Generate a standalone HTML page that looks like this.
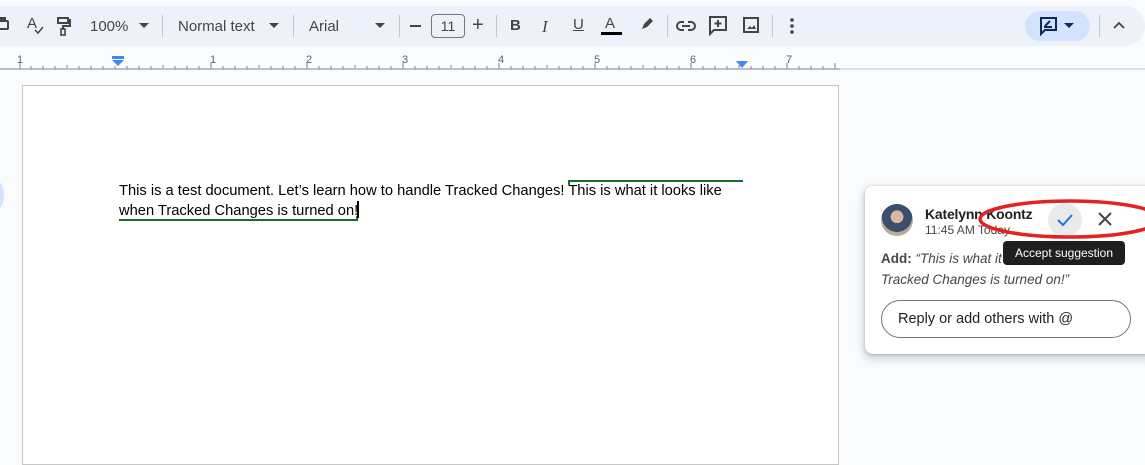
<!DOCTYPE html>
<html><head><style>
body{margin:0;width:1145px;height:456px;overflow:hidden;background:#f9fbfd;font-family:"Liberation Sans",Arial,sans-serif;position:relative}
.a{position:absolute}
.tb{left:-20px;top:6px;width:1165px;height:40px;background:#edf2fa;border-radius:20px}
.t{color:#444746;font-size:15px}
.sep{width:1px;height:22px;background:#c7c7c7;top:15px}
.car{position:absolute;top:23px;width:0;height:0;border-left:5px solid transparent;border-right:5px solid transparent;border-top:5px solid #444746}
</style></head><body>
<div class="a tb"></div>
<svg class="a" style="left:0;top:16px" width="12" height="20"><rect x="-6" y="5" width="14" height="8" rx="1" fill="none" stroke="#444" stroke-width="2"/><rect x="-2" y="1" width="8" height="4" fill="#444"/></svg>
<div class="a t" style="left:27px;top:15px;font-size:15px">A</div>
<svg class="a" style="left:34px;top:26px" width="10" height="9"><path d="M1 4l3 3 5-6" fill="none" stroke="#444" stroke-width="1.5"/></svg>
<svg class="a" style="left:56px;top:16px" width="16" height="20"><rect x="2" y="2" width="10" height="5" fill="none" stroke="#444" stroke-width="2"/><path d="M12 4h2v6H7v3" fill="none" stroke="#444" stroke-width="2"/><rect x="5" y="13" width="4" height="6" fill="none" stroke="#444" stroke-width="1.6"/></svg>
<div class="a t" style="left:90px;top:18px">100%</div>
<div class="car" style="left:139px"></div>
<div class="a sep" style="left:162px"></div>
<div class="a t" style="left:178px;top:18px">Normal text</div>
<div class="car" style="left:269px"></div>
<div class="a sep" style="left:293px"></div>
<div class="a t" style="left:309px;top:18px">Arial</div>
<div class="car" style="left:375px"></div>
<div class="a sep" style="left:399px"></div>
<div class="a" style="left:410px;top:25px;width:11px;height:2px;background:#444"></div>
<div class="a" style="left:431px;top:14px;width:34px;height:24px;border:1px solid #747775;border-radius:4px;box-sizing:border-box;text-align:center;font-size:14px;line-height:22px;color:#444">11</div>
<div class="a t" style="left:472px;top:14px;font-size:20px">+</div>
<div class="a sep" style="left:496px"></div>
<div class="a t" style="left:510px;top:17px;font-weight:bold">B</div>
<div class="a t" style="left:542px;top:17px;font-style:italic;font-family:'Liberation Serif';font-size:17px">I</div>
<div class="a t" style="left:573px;top:16px;text-decoration:underline">U</div>
<div class="a t" style="left:605px;top:15px">A</div>
<div class="a" style="left:601px;top:32px;width:21px;height:3px;background:#000"></div>
<svg class="a" style="left:639px;top:16px" width="16" height="16"><path d="M3 13l2-5 6-6 3 3-6 6z" fill="#444"/></svg>
<div class="a sep" style="left:667px"></div>
<svg class="a" style="left:676px;top:16px" width="20" height="20"><path d="M8 6H5a4 4 0 0 0 0 8h3M12 6h3a4 4 0 0 1 0 8h-3M6 10h8" fill="none" stroke="#444" stroke-width="2"/></svg>
<svg class="a" style="left:708px;top:15px" width="20" height="22"><path d="M2 2h16v13H6l-4 4z" fill="none" stroke="#444" stroke-width="2"/><path d="M10 5v7M6.5 8.5h7" stroke="#444" stroke-width="2"/></svg>
<svg class="a" style="left:741px;top:15px" width="20" height="20"><rect x="3" y="3" width="14" height="14" fill="none" stroke="#444" stroke-width="2"/><path d="M6 14l3-3 2 2 2-3 2 4z" fill="#444"/></svg>
<div class="a sep" style="left:772px"></div>
<svg class="a" style="left:788px;top:16px" width="8" height="20"><circle cx="4" cy="4" r="1.8" fill="#444"/><circle cx="4" cy="10" r="1.8" fill="#444"/><circle cx="4" cy="16" r="1.8" fill="#444"/></svg>
<div class="a" style="left:1025px;top:11px;width:65px;height:30px;background:#d3e3fd;border-radius:15px"></div>
<svg class="a" style="left:1040px;top:17px" width="18" height="20"><path d="M1 1h15v12H5l-4 4z" fill="none" stroke="#0b2a5a" stroke-width="2"/><path d="M4 10h8M5 9l5-5" stroke="#0b2a5a" stroke-width="2"/></svg>
<div class="car" style="left:1064px;border-top-color:#0b2a5a"></div>
<div class="a sep" style="left:1099px"></div>
<svg class="a" style="left:1112px;top:20px" width="14" height="10"><path d="M2 8l5-5 5 5" fill="none" stroke="#444" stroke-width="1.8"/></svg>
<svg class="a" style="left:0;top:50px" width="1145" height="22">
<line x1="0" y1="19" x2="1145" y2="19" stroke="#c7c7c7"/>
<line x1="0" y1="19" x2="840" y2="19" stroke="#80868b"/>
<g stroke="#80868b" stroke-width="1">
<path d="M20 13v6M31 16v3M43 16v3M55 16v3M67 15v3M79 16v3M91 16v3M103 16v3M115 16v3M127 16v3M139 16v3M151 16v3M163 15v3M175 16v3M187 16v3M199 16v3M211 13v6M223 16v3M235 16v3M247 16v3M259 15v3M271 16v3M283 16v3M295 16v3M307 13v6M319 16v3M331 16v3M343 16v3M355 15v3M367 16v3M379 16v3M391 16v3M403 13v6M415 16v3M427 16v3M439 16v3M451 15v3M463 16v3M475 16v3M487 16v3M499 13v6M511 16v3M523 16v3M535 16v3M547 15v3M559 16v3M571 16v3M583 16v3M595 13v6M607 16v3M619 16v3M631 16v3M643 15v3M655 16v3M667 16v3M679 16v3M691 13v6M703 16v3M715 16v3M727 16v3M739 15v3M751 16v3M763 16v3M775 16v3M787 13v6M799 16v3M811 16v3M823 16v3M835 13v6"/>
</g>
<g font-size="11" fill="#5f6368" font-family="Liberation Sans" text-anchor="middle">
<text x="20" y="13">1</text><text x="213" y="13">1</text><text x="309" y="13">2</text><text x="405" y="13">3</text><text x="501" y="13">4</text><text x="597" y="13">5</text><text x="693" y="13">6</text><text x="789" y="13">7</text></g>
<rect x="112" y="6" width="12" height="3" fill="#4285f4"/><path d="M112 10h12l-6 6z" fill="#4285f4"/>
<path d="M736 11h12l-6 7z" fill="#4285f4"/>
</svg>
<div class="a" style="left:22px;top:85px;width:817px;height:380px;background:#fff;border:1px solid #c7c7c7;box-sizing:border-box"></div>
<div class="a" style="left:-14px;top:180px;width:18px;height:30px;border-radius:50%;background:#d3e3fd"></div>
<div class="a" style="left:119px;top:181px;font-size:14.7px;line-height:20px;color:#000;white-space:nowrap">This is a test document. Let’s learn how to handle Tracked Changes! This is what it looks like<br>when Tracked Changes is turned on!</div>
<div class="a" style="left:568px;top:180px;width:175px;height:2px;background:#146c2e"></div>
<div class="a" style="left:568px;top:180px;width:2px;height:5px;background:#146c2e"></div>
<div class="a" style="left:119px;top:219px;width:239px;height:2px;background:#146c2e"></div>
<div class="a" style="left:356px;top:216px;width:2px;height:5px;background:#146c2e"></div>
<div class="a" style="left:357px;top:201px;width:2px;height:17px;background:#000"></div>
<div class="a" style="left:865px;top:186px;width:290px;height:168px;background:#fff;border-radius:8px;box-shadow:0 1px 3px rgba(60,64,67,.3),0 4px 8px 3px rgba(60,64,67,.15)"></div>
<div class="a" style="left:881px;top:204px;width:32px;height:32px;border-radius:50%;background:radial-gradient(circle at 50% 40%,#d9b8a0 0 25%,#3a4f6e 26% 60%,#b9aa9a 61%)"></div>
<div class="a" style="left:925px;top:206px;font-size:14px;color:#1f1f1f;font-weight:bold;letter-spacing:-0.2px">Katelynn Koontz</div>
<div class="a" style="left:925px;top:223px;font-size:12px;color:#444746">11:45 AM Today</div>
<div class="a" style="left:1048px;top:203px;width:34px;height:34px;border-radius:50%;background:#e9eaec"></div>
<svg class="a" style="left:1056px;top:212px" width="18" height="16"><path d="M2 8l5 5 9-10" fill="none" stroke="#1a73e8" stroke-width="2"/></svg>
<svg class="a" style="left:1097px;top:211px" width="16" height="16"><path d="M2 2l12 12M14 2L2 14" stroke="#444" stroke-width="2"/></svg>
<svg class="a" style="left:975px;top:194px" width="175" height="50"><ellipse cx="95" cy="25" rx="90" ry="18" fill="none" stroke="#e32222" stroke-width="3.5"/></svg>
<div class="a" style="left:881px;top:248px;font-size:13.5px;color:#444746;font-style:italic;line-height:21px"><b style="font-style:normal">Add:</b> “This is what it<br>Tracked Changes is turned on!”</div>
<div class="a" style="left:1003px;top:241px;width:122px;height:24px;background:#1f1f1f;border-radius:4px;color:#fff;font-size:12px;line-height:24px;text-align:center">Accept suggestion</div>
<div class="a" style="left:881px;top:300px;width:250px;height:38px;border:1px solid #747775;border-radius:19px;box-sizing:border-box;font-size:14.5px;color:#1f1f1f;line-height:36px;padding-left:16px">Reply or add others with @</div>
</body></html>
